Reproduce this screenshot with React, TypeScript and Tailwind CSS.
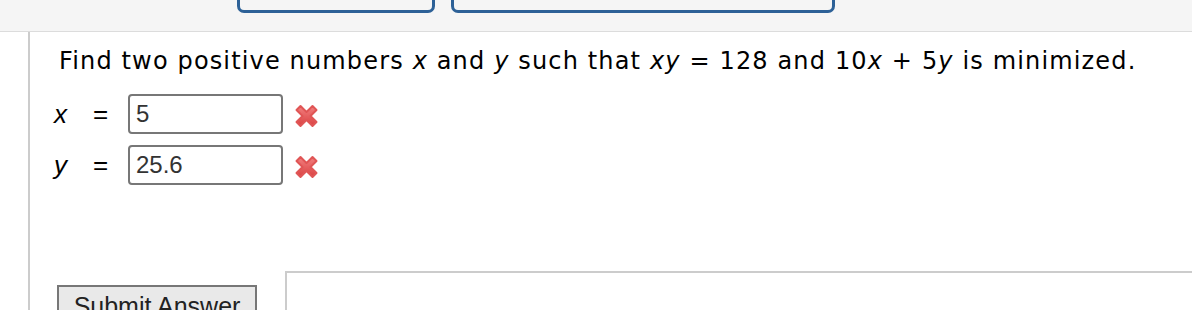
import React from "react";

function RedX() {
  return (
    <svg width="29" height="28" viewBox="0 0 29 28">
      <defs>
        <linearGradient id="rx" x1="0" y1="0" x2="0" y2="1">
          <stop offset="0" stopColor="#f27f7f" />
          <stop offset="1" stopColor="#da4242" />
        </linearGradient>
      </defs>
      <path
        d="M4.5 8 L8.5 4 L14.5 10 L20.5 4 L24.5 8 L18.5 14 L24.5 20 L20.5 24 L14.5 18 L8.5 24 L4.5 20 L10.5 14 Z"
        fill="url(#rx)"
        stroke="#e05555"
        strokeWidth="2"
        strokeLinejoin="round"
      />
    </svg>
  );
}

export default function App() {
  const sans = { fontFamily: '"DejaVu Sans", Verdana, sans-serif', letterSpacing: "1.15px" };
  return (
    <div className="w-[1192px] h-[310px] overflow-hidden bg-white relative" style={{ fontFamily: '"Liberation Sans", Arial, sans-serif' }}>
      <div className="h-[32px] bg-[#f5f5f5] border-b border-[#dcdcdc] flex items-start">
        <div className="ml-[237px] mt-[-28px] w-[198px] h-[41px] border-[3px] border-[#2d6197] rounded-[7px]" />
        <div className="ml-[16px] mt-[-28px] w-[384px] h-[41px] border-[3px] border-[#2d6197] rounded-[7px]" />
      </div>
      <div className="pl-[28px] h-[278px]">
        <div className="h-full border-l-2 border-[#cccccc] pl-[29px] pt-[14px]">
          <p className="text-[24px] leading-[30px] text-black whitespace-nowrap" style={sans}>
            Find two positive numbers <i>x</i> and <i>y</i> such that <i>xy</i> = 128 and 10<i>x</i> + 5<i>y</i> is minimized.
          </p>
          <div className="mt-[18px] flex flex-col gap-[11px]">
            <div className="flex items-center h-[40px]">
              <span className="w-[39px] text-[26px] italic text-black -ml-[5px]">x</span>
              <span className="w-[35px] text-[26px] text-black">=</span>
              <div className="w-[155px] h-[40px] border-2 border-[#777] rounded-[4px] flex items-center pl-[6px] text-[24px] text-[#333]">5</div>
              <div className="ml-[9px] mt-[3px]"><RedX /></div>
            </div>
            <div className="flex items-center h-[40px]">
              <span className="w-[39px] text-[26px] italic text-black -ml-[5px]">y</span>
              <span className="w-[35px] text-[26px] text-black">=</span>
              <div className="w-[155px] h-[40px] border-2 border-[#777] rounded-[4px] flex items-center pl-[6px] text-[24px] text-[#333]">25.6</div>
              <div className="ml-[9px] mt-[3px]"><RedX /></div>
            </div>
          </div>
          <div className="mt-[86px] flex items-start">
            <button className="mt-[14px] -ml-[2px] w-[200px] h-[36px] border-2 border-[#777] bg-[#e9e9e9] text-[25px] text-[#222] leading-[34px] text-center pt-[2px]">
              Submit Answer
            </button>
            <div className="ml-[28px] flex-1 h-[60px] border-2 border-r-0 border-[#cccccc]" />
          </div>
        </div>
      </div>
    </div>
  );
}
